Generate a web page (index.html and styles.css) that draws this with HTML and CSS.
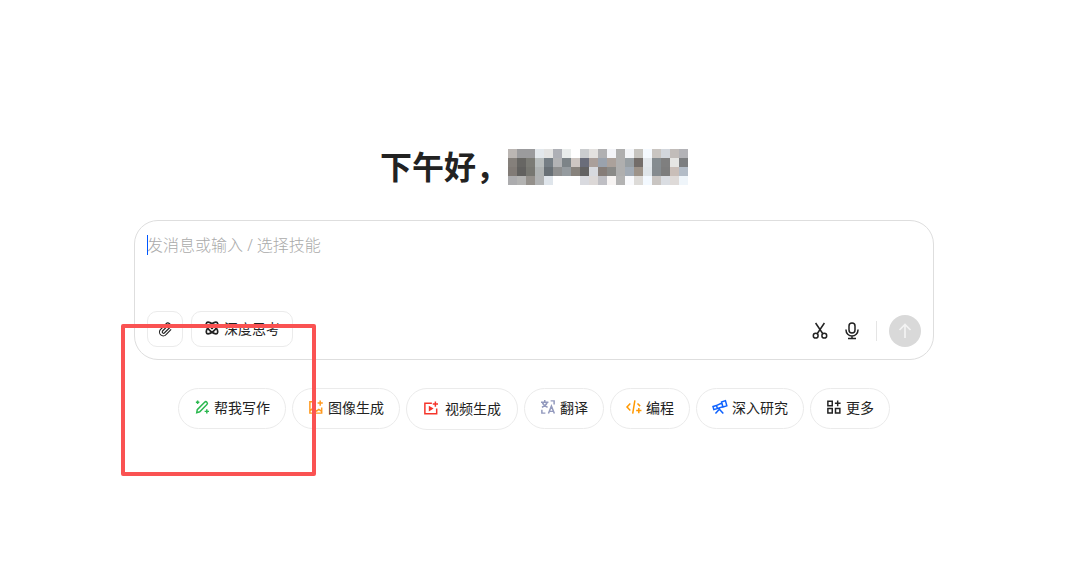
FILE: index.html
```html
<!DOCTYPE html>
<html lang="zh-CN">
<head>
    <meta charset="UTF-8">
    <meta name="viewport" content="width=device-width, initial-scale=1.0">
    <title>下午好</title>
    <link rel="stylesheet" href="styles.css">
</head>
<body>
    <main class="home">
        <h1 class="greeting">下午好，<svg class="masked-name" id="maskedName" viewBox="0 0 20 4" shape-rendering="crispEdges" aria-hidden="true"></svg></h1>

        <form class="composer">
            <div class="field">
                <textarea class="message" rows="2" aria-label="消息" placeholder="发消息或输入 / 选择技能"></textarea>
                <span class="caret"></span>
            </div>
            <div class="toolbar">
                <div class="tools">
                    <button type="button" class="tool attach" aria-label="附件">
                        <svg class="icon attach-icon" viewBox="0 0 16 16"><path d="M15 8.500 9.500 14a4.200 4.200 0 0 1-7-5L9 2.300a3 3 0 0 1 4.500 4L7.500 12.300a1.500 1.500 0 0 1-2.300-2L10.500 5"/></svg>
                    </button>
                    <button type="button" class="tool think">
                        <svg class="icon think-icon" viewBox="0 0 16 16"><ellipse cx="8" cy="8" rx="8.500" ry="3.800" transform="rotate(45 8 8)"/><ellipse cx="8" cy="8" rx="8.500" ry="3.800" transform="rotate(-45 8 8)"/><circle class="solid" cx="8" cy="8" r="1.500"/></svg>
                        深度思考
                    </button>
                </div>
                <div class="actions">
                    <button type="button" class="action" aria-label="截图">
                        <svg class="icon" viewBox="0 0 16 16"><path d="M3.600 0 11 11M12.400 0 5 11"/><circle cx="3.700" cy="12.700" r="2.400"/><circle cx="12.300" cy="12.700" r="2.400"/></svg>
                    </button>
                    <button type="button" class="action" aria-label="语音">
                        <svg class="icon mic-icon" viewBox="0 0 16 18"><rect x="5" y="1" width="6" height="10" rx="3"/><path d="M2 7.500v.5a6 6 0 0 0 12 0v-.5M8 14v2.500M4 16.500h8"/></svg>
                    </button>
                    <span class="divider"></span>
                    <button type="submit" class="send" aria-label="发送">
                        <svg class="icon send-icon" viewBox="0 0 16 16"><path d="M8 15V1.500M2.500 7 8 1.500 13.500 7"/></svg>
                    </button>
                </div>
            </div>
        </form>

        <nav class="skills">
            <button type="button" class="chip green">
                <svg class="icon" viewBox="0 0 16 16"><path d="M2 14.500l.6-3.500L11 2.500a1.700 1.700 0 0 1 2.600 2.600l-8.200 8.400zM3 .5v4M1 2.500h4M13.500 10.500v5M11 13h5"/></svg>
                帮我写作
            </button>
            <button type="button" class="chip orange">
                <svg class="icon" viewBox="0 0 16 16"><path d="M8 2H1v13h13.500V8.500M1 12.500l3.700-3 4 3.200 2.500-2 3.300 2.300M12.800 .5v6M9.800 3.500h6"/><circle class="solid" cx="5" cy="6" r="1.200"/></svg>
                图像生成
            </button>
            <button type="button" class="chip red video">
                <svg class="icon" viewBox="0 0 16 16"><path d="M9 2.500H1V14.500h13.500V8.500M13 .5v6M10 3.500h6"/><path class="solid" d="m5.500 5.500 5.500 3.200-5.500 3.200z"/></svg>
                视频生成
            </button>
            <button type="button" class="chip lilac">
                <svg class="icon" viewBox="0 0 16 16"><path d="M0 2.500h8.500M4.300 0v2.500M1.600 2.800c.9 2.500 2.700 4.300 5.900 5.400M7 2.800C6.200 5.300 4.200 7.200 1 8.200M8.500 15.500l3.400-8.500 3.400 8.500M9.700 13h4.500M11 1h4v4M1 11v4h4"/></svg>
                翻译
            </button>
            <button type="button" class="chip amber">
                <svg class="icon" viewBox="0 0 16 16"><path d="M3.800 4 0 8l3.800 4M9 .5 6.500 15.500M12 4l3 3M13.500 9v6M10.500 12h6"/></svg>
                编程
            </button>
            <button type="button" class="chip blue">
                <svg class="icon" viewBox="0 0 16 16"><path d="m0 7.500 1 3.500L5 9.800l-1-3.500zM4.300 6.200l5.800-2.700 1.200 4.300-6 1.800M9.800 2.200l4.400-1.500 1.600 6-4.400 1.300zM7.300 9v2M7.300 10.500l-4.500 5M7.300 10.500l4.500 5"/></svg>
                深入研究
            </button>
            <button type="button" class="chip">
                <svg class="icon" viewBox="0 0 16 16"><path d="M1 1.500h5v5H1zM1 9.800h5v5H1zM9.700 9.800h5v5h-5zM12.200 .5v6.500M9 3.800h6.500"/></svg>
                更多
            </button>
        </nav>
    </main>

    <div class="highlight"></div>

    <script>
        const rows = [
            'bbb6b3 9b9b9d 9b9b9d e3e8ec e3e3e2 aeb0b6 e9eceb ffffff cbcdcf e3e1df b0b0b2 f3f4f8 afafaf f3f5f8 c6c4bf f5faff c9c5c1 d2d6dc c1bcb9 b3b3b7',
            '85807b 676663 7b7b75 b8bdbd 757e85 b2b3b5 7d8488 cdc6c2 6a6d7a aa9f9a 9aa2ad aba19b afafaf 989fa3 736d69 e3e8ec 858c90 7f7f7f e5e5e3 7c7e80',
            '817b76 62615f 777771 afb3b3 687076 8f9090 959b9f 87827c 636262 d7d9de 867d78 8a8a88 afafaf a2abb5 9d9389 dfe5e9 858b8f 7d7d7d c9beb8 b3bcc7',
            'acacae b3b3b2 94908b b1b3b4 dfe5eb ffffff ffffff ffffff d9dadf dcd8d7 bfbfc4 f7f4f3 b3b3b3 f9fafd dddbd8 f3f9ff c9c5c2 dadde2 dedad8 eff5fa'
        ];
        const maskedName = document.getElementById('maskedName');

        rows.forEach((row, y) => {
            row.split(' ').forEach((color, x) => {
                const cell = document.createElementNS('http://www.w3.org/2000/svg', 'rect');
                cell.setAttribute('x', x);
                cell.setAttribute('y', y);
                cell.setAttribute('width', 1);
                cell.setAttribute('height', 1);
                cell.setAttribute('fill', '#' + color);
                maskedName.appendChild(cell);
            });
        });
    </script>
</body>
</html>
```
FILE: styles.css
```css
* {
    box-sizing: border-box;
}

body {
    margin: 0;
    background: #fff;
    color: #222;
    font-family: "Noto Sans CJK SC", sans-serif;
    font-size: 14px;
}

button,
textarea {
    font: inherit;
    color: inherit;
}

button {
    display: flex;
    align-items: center;
    justify-content: center;
    padding: 0;
    border: 0;
    background: none;
    white-space: nowrap;
}

.home {
    display: flex;
    flex-direction: column;
    align-items: center;
    padding: 145px 19px 0 16px;
}

.greeting {
    display: flex;
    align-items: flex-end;
    margin: 0 0 35px;
    font-size: 32px;
    line-height: 40px;
}

.masked-name {
    width: 180px;
    height: 36px;
}

.icon {
    flex: none;
    width: 14px;
    height: 14px;
    margin: 0 1px;
    overflow: visible;
    fill: none;
    stroke: currentColor;
    stroke-width: 1.7;
}

.icon .solid {
    fill: currentColor;
    stroke: none;
}

.composer {
    width: 100%;
    max-width: 800px;
    padding: 12px;
    border: 1px solid #dedede;
    border-radius: 24px;
}

.field {
    position: relative;
}

.message {
    display: block;
    width: 100%;
    height: 78px;
    padding: 0;
    border: 0;
    outline: 0;
    resize: none;
    background: none;
    font-family: "Noto Sans", "Noto Sans CJK SC", sans-serif;
    font-size: 16px;
    font-weight: 300;
    line-height: 24px;
}

.message::placeholder {
    color: #aaa;
}

.caret {
    position: absolute;
    top: 2px;
    left: 0;
    width: 1px;
    height: 20px;
    background: #0057ff;
}

.toolbar,
.tools,
.actions {
    display: flex;
    align-items: flex-end;
}

.toolbar {
    justify-content: space-between;
}

.tools {
    gap: 8px;
}

.tool {
    height: 36px;
    border: 1px solid #ebebeb;
    border-radius: 10px;
}

.attach {
    width: 36px;
}

.attach-icon {
    stroke-width: 1.3;
}

.think {
    gap: 4px;
    padding: 0 12px 2px;
}

.think-icon {
    stroke-width: 2;
}

.actions {
    align-items: center;
}

.action {
    width: 32px;
    height: 32px;
}

.action .icon {
    width: 16px;
    height: 16px;
    stroke-width: 1.5;
}

.action .mic-icon {
    height: 18px;
}

.divider {
    width: 1px;
    height: 20px;
    margin: 0 12px 0 8px;
    background: #e5e5e5;
}

.send {
    width: 32px;
    height: 32px;
    border-radius: 50%;
    background: #d9d9d9;
    color: #f3f3f3;
}

.send-icon {
    width: 16px;
    height: 16px;
}

.skills {
    display: flex;
    flex-wrap: wrap;
    align-items: flex-start;
    justify-content: center;
    gap: 6px;
    margin-top: 28px;
}

.chip {
    height: 41px;
    gap: 4px;
    padding: 0 15px 3px;
    border: 1px solid #ebebeb;
    border-radius: 21px;
}

.video {
    height: 42px;
    gap: 6px;
    padding: 0 16px 3px;
}

.green .icon {
    color: #2bb84f;
}

.orange .icon {
    color: #ff9a1f;
}

.red .icon {
    color: #f5352b;
}

.lilac .icon {
    color: #9299bd;
}

.amber .icon {
    color: #ff9800;
}

.blue .icon {
    color: #0f62fe;
}

.highlight {
    position: absolute;
    top: 324px;
    left: 121px;
    width: 195px;
    height: 152px;
    border: 4px solid #fa5252;
    border-radius: 2px;
    pointer-events: none;
}
```
